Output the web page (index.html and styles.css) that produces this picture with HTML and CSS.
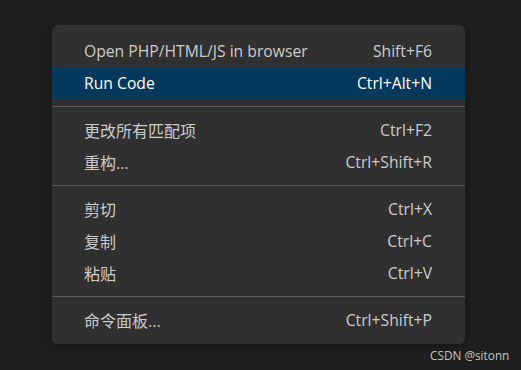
FILE: index.html
```html
<!DOCTYPE html>
<html>
<head>
<meta charset="utf-8">
<link rel="stylesheet" href="styles.css">
</head>
<body>
<div class="page">
  <div class="menu">
    <div class="item"><span class="label">Open PHP/HTML/JS in browser</span><span class="key">Shift+F6</span></div>
    <div class="item active"><span class="label">Run Code</span><span class="key">Ctrl+Alt+N</span></div>
    <div class="sep"></div>
    <div class="item"><span class="label zh">更改所有匹配项</span><span class="key">Ctrl+F2</span></div>
    <div class="item"><span class="label zh">重构...</span><span class="key">Ctrl+Shift+R</span></div>
    <div class="sep"></div>
    <div class="item"><span class="label zh">剪切</span><span class="key">Ctrl+X</span></div>
    <div class="item"><span class="label zh">复制</span><span class="key">Ctrl+C</span></div>
    <div class="item"><span class="label zh">粘贴</span><span class="key">Ctrl+V</span></div>
    <div class="sep"></div>
    <div class="item"><span class="label zh">命令面板...</span><span class="key">Ctrl+Shift+P</span></div>
  </div>
  <div class="watermark">CSDN @sitonn</div>
</div>
</body>
</html>
```

FILE: styles.css
```css
html, body {
  margin: 0;
  padding: 0;
  background: #1f1f1f;
}
.page {
  width: 521px;
  height: 370px;
  position: relative;
  padding: 25px 0 0 52px;
  box-sizing: border-box;
  font-family: "Open Sans", "Noto Sans CJK SC", sans-serif;
}
.menu {
  width: 413px;
  height: 319px;
  box-sizing: border-box;
  background: #303030;
  border-radius: 6px;
  padding: 10px 0 8px 0;
  box-shadow: 0 2px 8px rgba(0,0,0,0.35);
}
.item {
  height: 32px;
  display: flex;
  align-items: center;
  justify-content: space-between;
  padding: 0 33px 0 32px;
  font-size: 15.7px;
  color: #cccccc;
}
.item.active {
  background: #04395e;
  color: #ffffff;
}
.label.zh {
  font-size: 16px;
}
.sep {
  height: 1px;
  background: #5c5c5c;
  margin: 7px 0;
}
.watermark {
  position: absolute;
  left: 430px;
  top: 347px;
  font-size: 11.8px;
  color: #c4c4c4;
  font-family: "Open Sans", sans-serif;
}
```
